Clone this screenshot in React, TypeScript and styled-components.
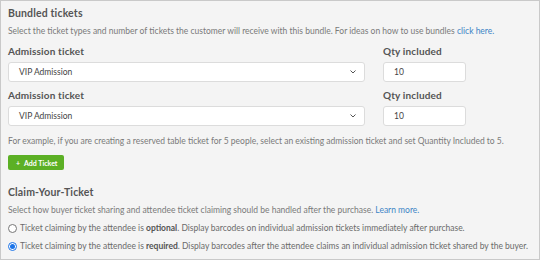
import styled, { createGlobalStyle } from 'styled-components';

const GlobalStyle = createGlobalStyle`
  html, body {
    margin: 0;
    padding: 0;
    background: #f4f4f4;
  }
  body {
    font-family: Lato, "Noto Sans", sans-serif;
  }
`;

const Panel = styled.div`
  box-sizing: border-box;
  width: 540px;
  height: 260px;
  border: 1px solid #c9c9c9;
  background: #f4f4f4;
  padding: 5px 8px 0 7px;
  color: #6b6b6b;
`;

const Title = styled.h6`
  margin: 0;
  font-size: 10.5px;
  font-weight: 700;
  color: #555;
  line-height: 14px;
  letter-spacing: 0.15px;
`;

const Help = styled.p<{ $gap?: number }>`
  margin: ${(p) => p.$gap ?? 4}px 0 0;
  font-size: 8.5px;
  line-height: 14px;
  color: #7a7a7a;

  a {
    color: #3d85c6;
    text-decoration: none;
  }
`;

const TicketRow = styled.div`
  display: grid;
  grid-template-columns: 357px 83px;
  column-gap: 18px;
  margin-top: 6px;
`;

const Field = styled.div`
  display: flex;
  flex-direction: column;
`;

const Label = styled.label`
  font-size: 10px;
  font-weight: 700;
  color: #555;
  line-height: 14px;
  margin-bottom: 4px;
  letter-spacing: 0.15px;
`;

const Box = styled.div`
  box-sizing: border-box;
  height: 20px;
  background: #fff;
  border: 1px solid #dcdcdc;
  border-radius: 3px;
  display: flex;
  align-items: center;
  justify-content: space-between;
  padding: 0 8px 0 10px;
  font-size: 8.5px;
  color: #444;
`;

const Chevron = styled.svg`
  width: 6px;
  height: 4px;
`;

const Button = styled.button`
  margin-top: 7px;
  height: 15px;
  padding: 0 7px 0 8px;
  border: none;
  border-radius: 2px;
  background: #5cb025;
  color: #fff;
  font-family: inherit;
  font-size: 7px;
  font-weight: 700;
  display: inline-flex;
  align-items: center;
  gap: 4px;
  cursor: pointer;
`;

const Section = styled.div`
  margin-top: 15px;
`;

const RadioRow = styled.label`
  display: flex;
  align-items: center;
  gap: 3px;
  margin-top: 4px;
  font-size: 8.5px;
  line-height: 14px;
  color: #6b6b6b;

  b {
    color: #555;
  }
`;

const Radio = styled.span<{ $checked?: boolean }>`
  box-sizing: border-box;
  width: 9px;
  height: 9px;
  border-radius: 50%;
  border: 1px solid ${(p) => (p.$checked ? '#1a73e8' : '#777')};
  background: #fff;
  display: inline-flex;
  align-items: center;
  justify-content: center;

  &::after {
    content: '';
    width: 5px;
    height: 5px;
    border-radius: 50%;
    background: ${(p) => (p.$checked ? '#1a73e8' : 'transparent')};
  }
`;

function TicketFields(): JSX.Element {
  return (
    <TicketRow>
      <Field>
        <Label>Admission ticket</Label>
        <Box>
          VIP Admission
          <Chevron viewBox="0 0 6 4">
            <path d="M0.5 0.5 L3 3 L5.5 0.5" fill="none" stroke="#555" strokeWidth="1" />
          </Chevron>
        </Box>
      </Field>
      <Field>
        <Label>Qty included</Label>
        <Box>10</Box>
      </Field>
    </TicketRow>
  );
}

function App(): JSX.Element {
  return (
    <Panel>
      <GlobalStyle />
      <Title>Bundled tickets</Title>
      <Help>
        Select the ticket types and number of tickets the customer will receive with this
        bundle. For ideas on how to use bundles <a href="#">click here.</a>
      </Help>
      <TicketFields />
      <TicketFields />
      <Help $gap={8}>
        For example, if you are creating a reserved table ticket for 5 people, select an
        existing admission ticket and set Quantity Included to 5.
      </Help>
      <Button type="button">
        <span>+</span>
        <span>Add Ticket</span>
      </Button>
      <Section>
        <Title>Claim-Your-Ticket</Title>
        <Help>
          Select how buyer ticket sharing and attendee ticket claiming should be handled after
          the purchase. <a href="#">Learn more.</a>
        </Help>
        <RadioRow>
          <Radio />
          <span>
            Ticket claiming by the attendee is <b>optional</b>. Display barcodes on individual
            admission tickets immediately after purchase.
          </span>
        </RadioRow>
        <RadioRow>
          <Radio $checked />
          <span>
            Ticket claiming by the attendee is <b>required</b>. Display barcodes after the
            attendee claims an individual admission ticket shared by the buyer.
          </span>
        </RadioRow>
      </Section>
    </Panel>
  );
}

export default App;
